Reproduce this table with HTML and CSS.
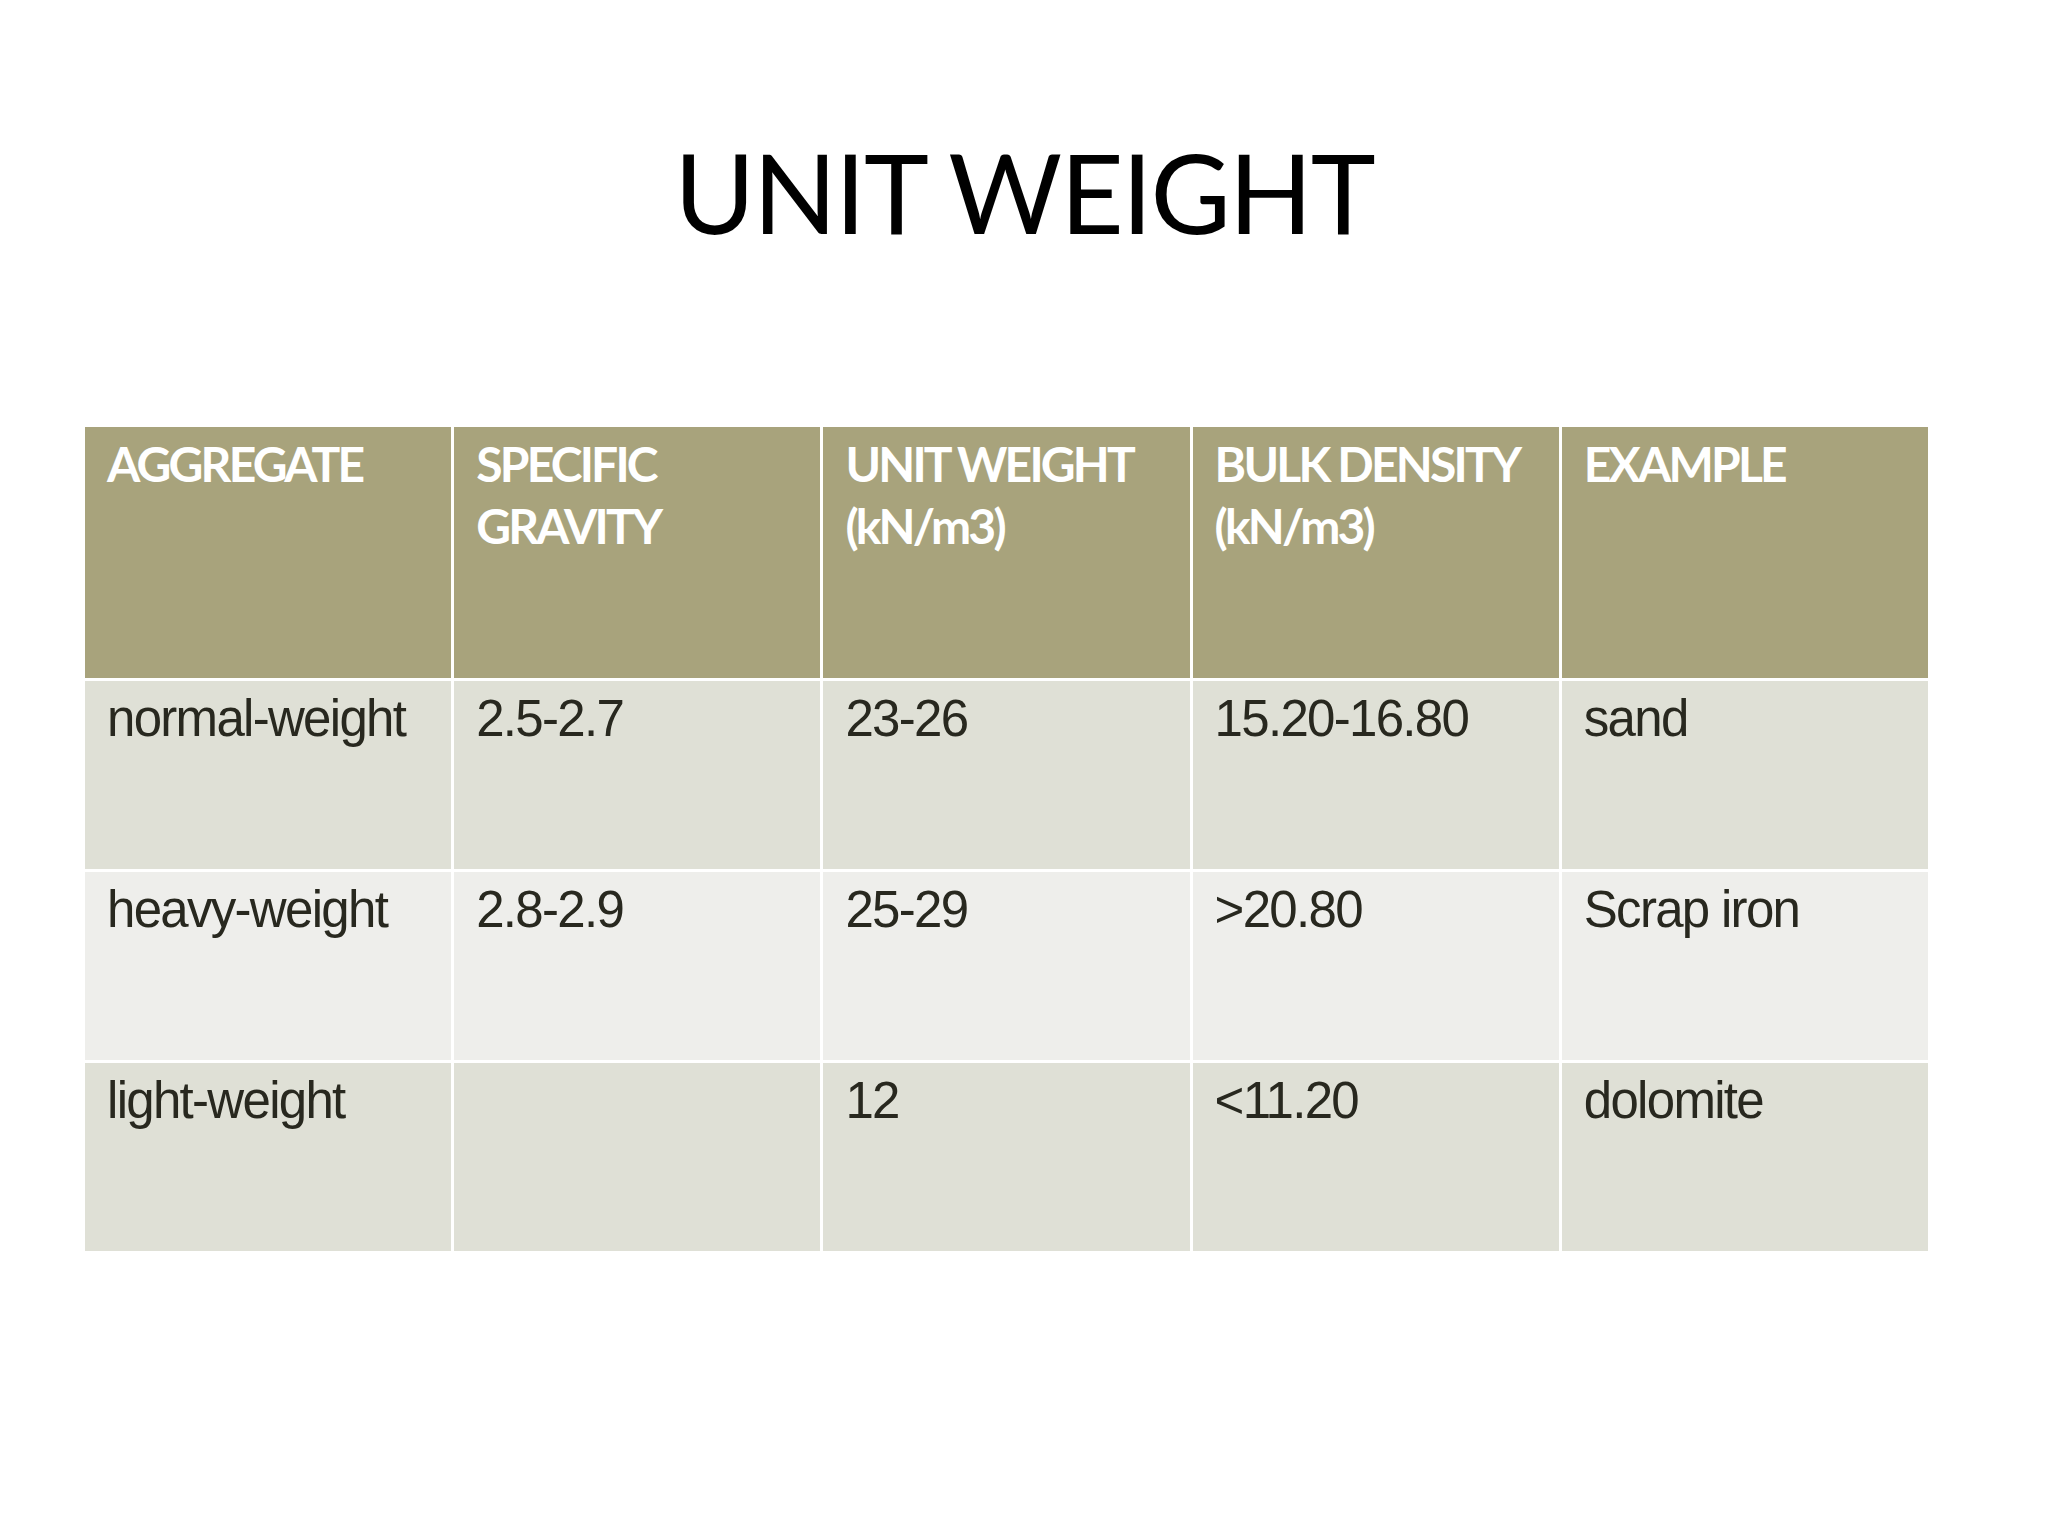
FILE: index.html
```html
<!DOCTYPE html>
<html lang="en">
<head>
<meta charset="utf-8">
<title>Unit Weight</title>
<link rel="stylesheet" href="styles.css">
</head>
<body>
<main class="slide">
  <h1 class="title">UNIT WEIGHT</h1>
  <div class="table">
    <div class="cell head">AGGREGATE</div>
    <div class="cell head">SPECIFIC<br>GRAVITY</div>
    <div class="cell head">UNIT WEIGHT<br>(kN/m3)</div>
    <div class="cell head">BULK DENSITY<br>(kN/m3)</div>
    <div class="cell head">EXAMPLE</div>

    <div class="cell odd">normal-weight</div>
    <div class="cell odd">2.5-2.7</div>
    <div class="cell odd">23-26</div>
    <div class="cell odd">15.20-16.80</div>
    <div class="cell odd">sand</div>

    <div class="cell even">heavy-weight</div>
    <div class="cell even">2.8-2.9</div>
    <div class="cell even">25-29</div>
    <div class="cell even">&gt;20.80</div>
    <div class="cell even">Scrap iron</div>

    <div class="cell odd">light-weight</div>
    <div class="cell odd"></div>
    <div class="cell odd">12</div>
    <div class="cell odd">&lt;11.20</div>
    <div class="cell odd">dolomite</div>
  </div>
</main>
</body>
</html>
```

FILE: styles.css
```css
html, body {
  margin: 0;
  padding: 0;
  background: #ffffff;
}

.slide {
  width: 2048px;
  height: 1536px;
  display: flex;
  flex-direction: column;
  box-sizing: border-box;
  padding-top: 124px;
}

.title {
  margin: 0;
  font-family: Lato, "Liberation Sans", sans-serif;
  font-weight: 400;
  font-size: 110px;
  line-height: 135px;
  letter-spacing: -2px;
  color: #000000;
  text-align: center;
}

.table {
  margin: 168px 0 0 85px;
  width: 1843px;
  display: grid;
  grid-template-columns: repeat(5, 1fr);
  grid-template-rows: 251px 188px 188px 188px;
  column-gap: 3px;
  row-gap: 3px;
}

.cell {
  box-sizing: border-box;
  padding: 8px 10px 0 22px;
  font-family: "Liberation Sans", Arial, sans-serif;
  font-size: 51px;
  letter-spacing: -1.7px;
  color: #28281f;
  white-space: nowrap;
}

.head {
  background: #a8a37c;
  color: #ffffff;
  font-family: Lato, "Liberation Sans", sans-serif;
  font-weight: 700;
  font-size: 48px;
  line-height: 62px;
  letter-spacing: -2.8px;
  padding-top: 6px;
}

.odd {
  background: #dfe0d6;
}

.even {
  background: #eeeeeb;
}
```
